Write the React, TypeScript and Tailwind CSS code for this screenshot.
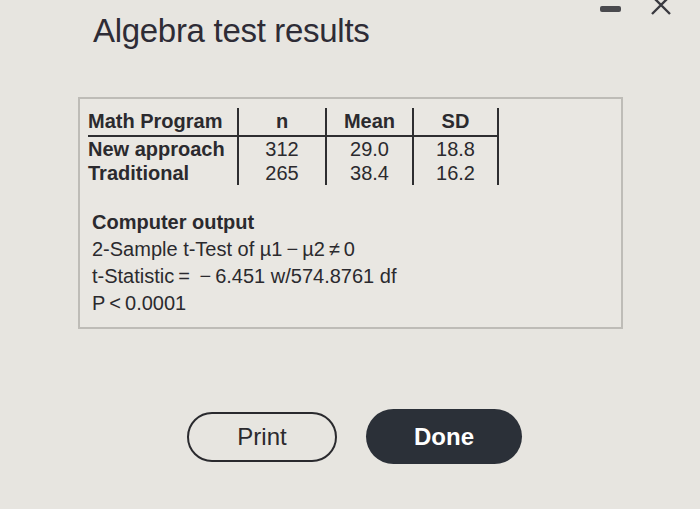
const rows = [
  { program: "New approach", n: "312", mean: "29.0", sd: "18.8" },
  { program: "Traditional", n: "265", mean: "38.4", sd: "16.2" },
];

const cell = "border-r-2 border-[#2e2e30] text-center";

export default function App() {
  return (
    <div
      className="flex h-[509px] w-[700px] flex-col overflow-hidden bg-[#e7e5e0] text-[#2b2a2e]"
      style={{ fontFamily: '"Liberation Sans", Arial, sans-serif' }}
    >
      {/* title bar */}
      <div className="flex items-start">
        <h1 className="ml-[93px] mt-[14px] text-[33px] leading-none tracking-[-0.3px] text-[#2e2c36]">
          Algebra test results
        </h1>
        <div className="ml-auto mr-[28px] flex items-start gap-[29px]">
          <span className="mt-[6px] block h-[6px] w-[21px] rounded-[2px] bg-[#4a4a4e]" />
          <svg width="22" height="20" viewBox="0 0 22 20" className="-mt-[5px]">
            <path d="M2 1 L20 19 M20 1 L2 19" stroke="#3a3a40" strokeWidth="2.4" fill="none" />
          </svg>
        </div>
      </div>

      {/* results panel */}
      <div className="ml-[78px] mt-[50px] h-[232px] w-[545px] border-2 border-[#bebcb7] bg-[#e9e7e2] pl-[8px] pt-[9px]">
        <div className="grid w-fit grid-cols-[151px_88px_87px_85px] text-[20px]">
          <div className="flex h-[29px] items-center border-b-2 border-r-2 border-[#2e2e30] pb-[2px] font-bold">
            Math Program
          </div>
          <div className={`${cell} flex h-[29px] items-center justify-center border-b-2 pb-[2px] font-bold`}>n</div>
          <div className={`${cell} flex h-[29px] items-center justify-center border-b-2 pb-[2px] font-bold`}>Mean</div>
          <div className={`${cell} flex h-[29px] items-center justify-center border-b-2 pb-[2px] font-bold`}>SD</div>
          {rows.map((r) => (
            <div key={r.program} className="contents">
              <div className="flex h-[24px] items-center border-r-2 border-[#2e2e30] font-bold">{r.program}</div>
              <div className={`${cell} flex h-[24px] items-center justify-center`}>{r.n}</div>
              <div className={`${cell} flex h-[24px] items-center justify-center`}>{r.mean}</div>
              <div className={`${cell} flex h-[24px] items-center justify-center`}>{r.sd}</div>
            </div>
          ))}
        </div>

        <div className="ml-[4px] mt-[24px] text-[20px] leading-[27px]">
          <p className="font-bold">Computer output</p>
          <p>2-Sample t-Test of µ1{"\u2009−\u2009"}µ2{"\u2009≠\u2009"}0</p>
          <p>t-Statistic{"\u2009=\u2009 −\u2009"}6.451 w/574.8761 df</p>
          <p>P{"\u2009<\u2009"}0.0001</p>
        </div>
      </div>

      {/* actions */}
      <div className="ml-[187px] mt-[80px] flex items-center gap-[29px]">
        <button className="flex h-[50px] w-[150px] items-center justify-center rounded-full border-2 border-[#2a2a2e] text-[24px] text-[#2b2a2e]">
          Print
        </button>
        <button className="flex h-[55px] w-[156px] items-center justify-center rounded-full bg-[#2b3038] text-[24px] font-bold text-white">
          Done
        </button>
      </div>
    </div>
  );
}
